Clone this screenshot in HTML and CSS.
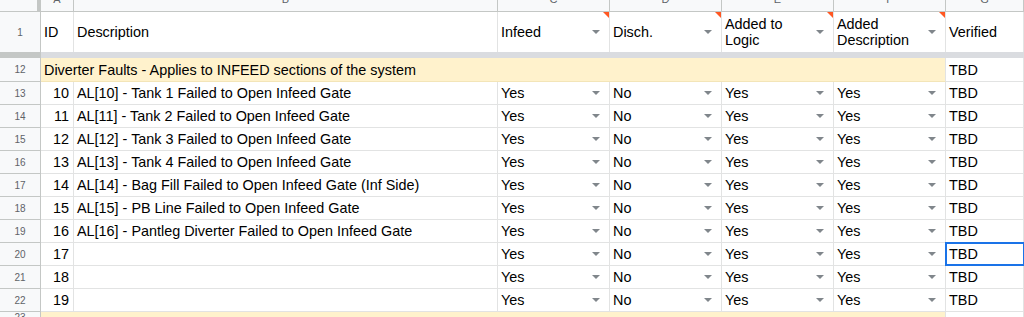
FILE: index.html
```html
<!DOCTYPE html>
<html lang="en">
<head>
  <meta charset="UTF-8">
  <title>Alarm list</title>
  <link rel="stylesheet" href="styles.css">
</head>
<body>
  <div class="sheet">
    <div class="row colhead">
      <div class="corner"></div>
      <div class="ch"><span>A</span></div>
      <div class="ch"><span>B</span></div>
      <div class="ch"><span>C</span></div>
      <div class="ch"><span>D</span></div>
      <div class="ch"><span>E</span></div>
      <div class="ch"><span>F</span></div>
      <div class="ch"><span>G</span></div>
    </div>

    <div class="row head">
      <div class="rh">1</div>
      <div class="cell">ID</div>
      <div class="cell">Description</div>
      <div class="cell note"><span>Infeed</span><i class="dd"></i></div>
      <div class="cell note"><span>Disch.</span><i class="dd"></i></div>
      <div class="cell note"><span>Added to<br>Logic</span><i class="dd"></i></div>
      <div class="cell note"><span>Added<br>Description</span><i class="dd"></i></div>
      <div class="cell">Verified</div>
    </div>

    <div class="row freeze">
      <div class="rh"></div>
      <div class="bar"></div>
    </div>

    <div class="row section">
      <div class="rh">12</div>
      <div class="cell merged">Diverter Faults - Applies to INFEED sections of the system</div>
      <div class="cell">TBD</div>
    </div>

    <div class="row">
      <div class="rh">13</div><div class="cell num">10</div>
      <div class="cell">AL[10] - Tank 1 Failed to Open Infeed Gate</div>
      <div class="cell"><span>Yes</span><i class="dd"></i></div><div class="cell"><span>No</span><i class="dd"></i></div>
      <div class="cell"><span>Yes</span><i class="dd"></i></div><div class="cell"><span>Yes</span><i class="dd"></i></div>
      <div class="cell">TBD</div>
    </div>
    <div class="row">
      <div class="rh">14</div><div class="cell num">11</div>
      <div class="cell">AL[11] - Tank 2 Failed to Open Infeed Gate</div>
      <div class="cell"><span>Yes</span><i class="dd"></i></div><div class="cell"><span>No</span><i class="dd"></i></div>
      <div class="cell"><span>Yes</span><i class="dd"></i></div><div class="cell"><span>Yes</span><i class="dd"></i></div>
      <div class="cell">TBD</div>
    </div>
    <div class="row">
      <div class="rh">15</div><div class="cell num">12</div>
      <div class="cell">AL[12] - Tank 3 Failed to Open Infeed Gate</div>
      <div class="cell"><span>Yes</span><i class="dd"></i></div><div class="cell"><span>No</span><i class="dd"></i></div>
      <div class="cell"><span>Yes</span><i class="dd"></i></div><div class="cell"><span>Yes</span><i class="dd"></i></div>
      <div class="cell">TBD</div>
    </div>
    <div class="row">
      <div class="rh">16</div><div class="cell num">13</div>
      <div class="cell">AL[13] - Tank 4 Failed to Open Infeed Gate</div>
      <div class="cell"><span>Yes</span><i class="dd"></i></div><div class="cell"><span>No</span><i class="dd"></i></div>
      <div class="cell"><span>Yes</span><i class="dd"></i></div><div class="cell"><span>Yes</span><i class="dd"></i></div>
      <div class="cell">TBD</div>
    </div>
    <div class="row">
      <div class="rh">17</div><div class="cell num">14</div>
      <div class="cell">AL[14] - Bag Fill Failed to Open Infeed Gate (Inf Side)</div>
      <div class="cell"><span>Yes</span><i class="dd"></i></div><div class="cell"><span>No</span><i class="dd"></i></div>
      <div class="cell"><span>Yes</span><i class="dd"></i></div><div class="cell"><span>Yes</span><i class="dd"></i></div>
      <div class="cell">TBD</div>
    </div>
    <div class="row">
      <div class="rh">18</div><div class="cell num">15</div>
      <div class="cell">AL[15] - PB Line Failed to Open Infeed Gate</div>
      <div class="cell"><span>Yes</span><i class="dd"></i></div><div class="cell"><span>No</span><i class="dd"></i></div>
      <div class="cell"><span>Yes</span><i class="dd"></i></div><div class="cell"><span>Yes</span><i class="dd"></i></div>
      <div class="cell">TBD</div>
    </div>
    <div class="row">
      <div class="rh">19</div><div class="cell num">16</div>
      <div class="cell">AL[16] - Pantleg Diverter Failed to Open Infeed Gate</div>
      <div class="cell"><span>Yes</span><i class="dd"></i></div><div class="cell"><span>No</span><i class="dd"></i></div>
      <div class="cell"><span>Yes</span><i class="dd"></i></div><div class="cell"><span>Yes</span><i class="dd"></i></div>
      <div class="cell">TBD</div>
    </div>
    <div class="row">
      <div class="rh">20</div><div class="cell num">17</div>
      <div class="cell"></div>
      <div class="cell"><span>Yes</span><i class="dd"></i></div><div class="cell"><span>No</span><i class="dd"></i></div>
      <div class="cell"><span>Yes</span><i class="dd"></i></div><div class="cell"><span>Yes</span><i class="dd"></i></div>
      <div class="cell sel">TBD</div>
    </div>
    <div class="row">
      <div class="rh">21</div><div class="cell num">18</div>
      <div class="cell"></div>
      <div class="cell"><span>Yes</span><i class="dd"></i></div><div class="cell"><span>No</span><i class="dd"></i></div>
      <div class="cell"><span>Yes</span><i class="dd"></i></div><div class="cell"><span>Yes</span><i class="dd"></i></div>
      <div class="cell">TBD</div>
    </div>
    <div class="row">
      <div class="rh">22</div><div class="cell num">19</div>
      <div class="cell"></div>
      <div class="cell"><span>Yes</span><i class="dd"></i></div><div class="cell"><span>No</span><i class="dd"></i></div>
      <div class="cell"><span>Yes</span><i class="dd"></i></div><div class="cell"><span>Yes</span><i class="dd"></i></div>
      <div class="cell">TBD</div>
    </div>

    <div class="row section tail">
      <div class="rh">23</div>
      <div class="cell merged"></div>
      <div class="cell"></div>
    </div>
  </div>
</body>
</html>
```

FILE: styles.css
```css
* { box-sizing: border-box; margin: 0; padding: 0; }
html, body { width: 100%; height: 100%; overflow: hidden; background: #fff; }
body { font-family: "Liberation Sans", Arial, sans-serif; font-size: 14.4px; color: #000; }

/* grid columns: row header, A..G */
.sheet { --cols: 41px 33px 424px 112px 112px 112px 112px 1fr; height: 317px; overflow: hidden; }
.row { display: grid; grid-template-columns: var(--cols); height: 23px; }

/* column letters (scrolled so only their feet show) */
.colhead { height: 12px; background: #f8f9fa; border-bottom: 1px solid #c4c7c5; overflow: hidden; }
.corner { border-right: 4px solid #c4c7c5; background: #f8f9fa; }
.ch {
  border-right: 1px solid #c4c7c5; color: #5f6368; font-size: 11px;
  display: flex; justify-content: center; line-height: 1;
}
.ch span { margin-top: -6px; }

/* row headers */
.rh {
  background: #f8f9fa; color: #5f6368; font-size: 10px;
  border-right: 1px solid #c4c7c5; border-bottom: 1px solid #c4c7c5;
  display: flex; align-items: center; justify-content: center;
}

/* cells */
.cell {
  position: relative; border-right: 1px solid #e2e3e3; border-bottom: 1px solid #e2e3e3;
  display: flex; align-items: center; justify-content: space-between;
  padding: 0 4px 0 3px; white-space: nowrap; overflow: hidden; line-height: 16px;
}
.cell.num { justify-content: flex-end; }
.dd {
  width: 0; height: 0; margin-right: 5px;
  border-left: 4px solid transparent; border-right: 4px solid transparent;
  border-top: 4px solid #80868b;
}

/* header row */
.head { height: 40px; }
.head .rh { border-bottom: none; }
.head .cell { border-bottom: none; }
.note::after {
  content: ""; position: absolute; top: 0; right: 0;
  border-top: 6px solid #ff5722; border-left: 6px solid transparent;
}

/* frozen divider */
.freeze { height: 6px; }
.freeze .rh { background: #c4c7c5; border: none; }
.freeze .bar { grid-column: 2 / -1; background: #dadce0; }

/* section rows */
.section { height: 24px; }
.section .merged { grid-column: 2 / 8; background: #fff2cc; border-bottom-color: #f3e5b8; }
.tail { height: 5px; }

/* active cell */
.sel { overflow: visible; }
.sel::after {
  content: ""; position: absolute; left: -1px; top: -1px; right: -2px; bottom: -1px;
  border: 2px solid #1a73e8;
}
```
